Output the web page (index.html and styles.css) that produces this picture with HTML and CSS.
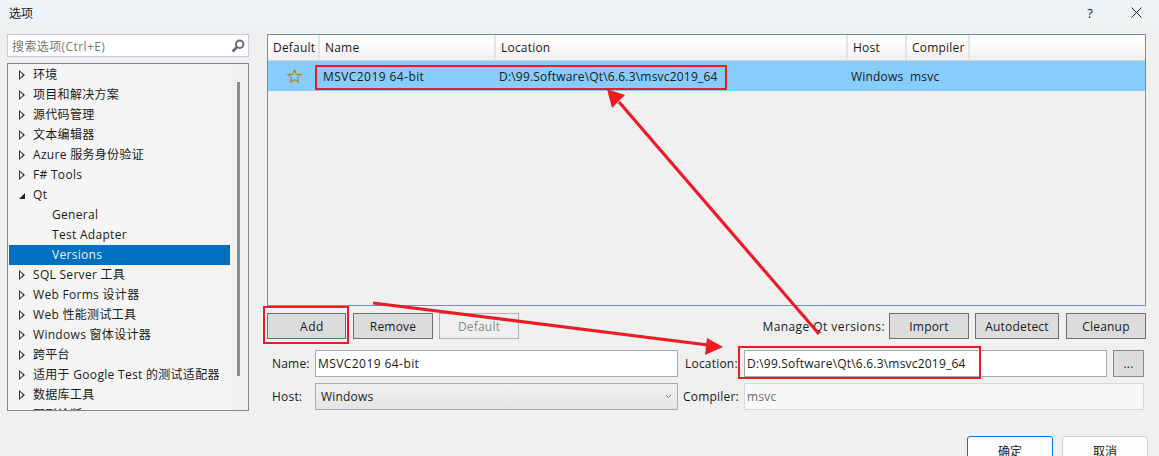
FILE: index.html
```html
<!DOCTYPE html>
<html lang="zh">
<head>
<meta charset="utf-8">
<title>选项</title>
<link rel="stylesheet" href="styles.css">
</head>
<body>
<div class="window">
  <header class="titlebar">
    <span class="title">选项</span>
    <span class="help">?</span>
    <svg class="close" width="11" height="11" viewBox="0 0 11 11"><path d="M0.5 0.5L10.5 10.5M10.5 0.5L0.5 10.5" stroke="#222" stroke-width="1" fill="none"/></svg>
  </header>
  <main class="main">
    <aside class="left">
      <div class="search">
        <span class="search-text">搜索选项(Ctrl+E)</span>
        <svg class="search-icon" width="14" height="14" viewBox="0 0 14 14"><circle cx="8.7" cy="5.3" r="3.7" fill="none" stroke="#6a6a6a" stroke-width="2"/><path d="M6 8L1.5 12.5" stroke="#6a6a6a" stroke-width="2.6" fill="none"/></svg>
      </div>
      <div class="tree">
        <div class="tree-list">
          <div class="node closed">环境</div>
          <div class="node closed">项目和解决方案</div>
          <div class="node closed">源代码管理</div>
          <div class="node closed">文本编辑器</div>
          <div class="node closed">Azure 服务身份验证</div>
          <div class="node closed">F# Tools</div>
          <div class="node open">Qt</div>
          <div class="node child">General</div>
          <div class="node child">Test Adapter</div>
          <div class="node child selected">Versions</div>
          <div class="node closed">SQL Server 工具</div>
          <div class="node closed">Web Forms 设计器</div>
          <div class="node closed">Web 性能测试工具</div>
          <div class="node closed">Windows 窗体设计器</div>
          <div class="node closed">跨平台</div>
          <div class="node closed">适用于 Google Test 的测试适配器</div>
          <div class="node closed">数据库工具</div>
          <div class="node closed">图形诊断</div>
        </div>
        <div class="scrollbar"><div class="thumb"></div></div>
      </div>
    </aside>
    <section class="right">
      <div class="table">
        <div class="thead">
          <div class="th c-default">Default</div>
          <div class="th c-name">Name</div>
          <div class="th c-location">Location</div>
          <div class="th c-host">Host</div>
          <div class="th c-compiler">Compiler</div>
        </div>
        <div class="tr">
          <div class="td c-default star-cell">
            <svg width="15" height="14" viewBox="0 0 15 14"><path d="M7.5 1L9.3 5.2L14 5.6L10.4 8.6L11.5 13L7.5 10.7L3.5 13L4.6 8.6L1 5.6L5.7 5.2Z" fill="none" stroke="#b0851f" stroke-width="1.2"/></svg>
          </div>
          <div class="td c-name wide">MSVC2019 64-bit</div>
          <div class="td c-location">D:\99.Software\Qt\6.6.3\msvc2019_64</div>
          <div class="td c-host">Windows</div>
          <div class="td c-compiler">msvc</div>
        </div>
      </div>
      <div class="actions">
        <button class="btn btn-add">Add</button>
        <button class="btn btn-remove">Remove</button>
        <button class="btn btn-off">Default</button>
        <span class="manage wide">Manage Qt versions:</span>
        <button class="btn btn-import">Import</button>
        <button class="btn btn-auto">Autodetect</button>
        <button class="btn btn-clean">Cleanup</button>
      </div>
      <div class="form">
        <label class="lbl">Name:</label>
        <div class="field wide">MSVC2019 64-bit</div>
        <label class="lbl lbl-loc">Location:</label>
        <div class="loc-wrap">
          <div class="field field-pad">D:\99.Software\Qt\6.6.3\msvc2019_64</div>
          <button class="btn browse">...</button>
        </div>
        <label class="lbl">Host:</label>
        <div class="select">Windows
          <svg class="chev" width="7" height="5" viewBox="0 0 7 5"><path d="M1 1L3.5 3.5L6 1" fill="none" stroke="#777" stroke-width="1"/></svg>
        </div>
        <label class="lbl lbl-comp">Compiler:</label>
        <div class="field field-off">msvc</div>
      </div>
    </section>
  </main>
  <footer class="footer">
    <button class="dlg dlg-ok">确定</button>
    <button class="dlg">取消</button>
  </footer>
  <svg class="marks" width="1159" height="456" viewBox="0 0 1159 456">
    <g fill="none" stroke="#ed1c24" stroke-width="2">
      <rect x="316" y="66" width="410" height="23"/>
      <rect x="264" y="307" width="84" height="36"/>
      <rect x="739" y="347" width="241" height="31"/>
    </g>
    <g stroke="#ed1c24" stroke-width="3.2" fill="none">
      <path d="M373 303L708 345"/>
      <path d="M819 334L619 102"/>
    </g>
    <g fill="#ed1c24">
      <polygon points="723,347 705,355 707,338"/>
      <polygon points="607,89 625,95 612,108"/>
    </g>
  </svg>
</div>
</body>
</html>
```

FILE: styles.css
```css
* { box-sizing: border-box; }
html, body { margin: 0; padding: 0; }
body {
  width: 1159px;
  height: 456px;
  overflow: hidden;
  background: #f0f0f0;
  color: #1a1a1a;
  font-family: "Open Sans", "Noto Sans CJK SC", sans-serif;
  font-size: 12px;
  letter-spacing: .2px;
}
.window { position: relative; width: 1159px; height: 456px; overflow: hidden; }
.wide { letter-spacing: .43px; }

.titlebar {
  height: 25px;
  background: #eff3f7;
  display: flex;
  align-items: center;
  padding: 0 17px 0 9px;
  font-size: 12px;
}
.title { flex: 1; letter-spacing: 0; }
.help { margin-right: 38px; font-size: 13px; }

.main { display: flex; padding: 9px 13px 0 7px; gap: 18px; }
.left { width: 242px; flex: none; }
.search {
  height: 23px;
  background: #fff;
  border: 1px solid #c5cbe0;
  display: flex;
  align-items: center;
  justify-content: space-between;
  padding: 0 3px 0 4px;
  color: #777;
  letter-spacing: .4px;
}
.tree {
  margin-top: 6px;
  height: 348px;
  border: 1px solid #828790;
  background: #f5f5f5;
  display: flex;
  overflow: hidden;
}
.tree-list { width: 222px; flex: none; padding: 1px 0 0 1px; overflow: hidden; }
.node {
  height: 20px;
  line-height: 20px;
  padding-left: 24px;
  position: relative;
  white-space: nowrap;
  letter-spacing: .3px;
}
.node.child { padding-left: 43px; }
.node.selected { background: #006fc0; color: #e8f3fb; }
.closed::before {
  content: "";
  position: absolute;
  left: 10px;
  top: 5px;
  width: 0;
  height: 0;
  border-left: 6px solid #333;
  border-top: 5px solid transparent;
  border-bottom: 5px solid transparent;
}
.closed::after {
  content: "";
  position: absolute;
  left: 11px;
  top: 7px;
  width: 0;
  height: 0;
  border-left: 3px solid #f5f5f5;
  border-top: 3px solid transparent;
  border-bottom: 3px solid transparent;
}
.open::before {
  content: "";
  position: absolute;
  left: 10px;
  top: 8px;
  width: 0;
  height: 0;
  border-right: 6px solid #222;
  border-top: 6px solid transparent;
}
.scrollbar { flex: 1; background: #f0f0f0; border-left: 1px solid #fafafa; padding: 18px 0 0 6px; }
.thumb { width: 3px; height: 294px; background: #8a8a8a; }

.right { width: 879px; flex: none; }
.table {
  height: 272px;
  border: 1px solid #6d8fb8;
  background: #f0f0f0;
}
.thead {
  display: flex;
  height: 26px;
  background: linear-gradient(#fff 20%, #f0f0f0);
  border-bottom: 1px solid #d5d5d5;
}
.th {
  line-height: 26px;
  padding-left: 5px;
  border-right: 2px solid #e4e4e4;
  height: 25px;
}
.tr { display: flex; height: 30px; line-height: 31px; background: #87cdfb; }
.td { padding-left: 3px; white-space: nowrap; }
.c-default { width: 52px; }
.c-name { width: 176px; }
.c-location { width: 352px; }
.c-host { width: 59px; }
.c-compiler { width: 63px; }
.star-cell { display: flex; align-items: center; justify-content: center; padding: 0 0 0 0; }

.actions { display: flex; align-items: center; margin-top: 7px; height: 26px; }
.btn {
  font: inherit;
  letter-spacing: inherit;
  color: inherit;
  height: 26px;
  padding: 0;
  background: #dcdcdc;
  border: 1px solid #707070;
}
.btn-add { width: 79px; margin-right: 7px; padding-left: 11px; letter-spacing: .5px; }
.btn-remove { width: 80px; margin-right: 6px; }
.btn-off { width: 80px; background: #f0f0f0; border-color: #adb2b5; color: #8a8a8a; }
.manage { margin-left: auto; margin-right: 4px; }
.btn-import { width: 80px; margin-right: 6px; }
.btn-auto { width: 84px; margin-right: 7px; }
.btn-clean { width: 80px; }

.form {
  display: grid;
  grid-template-columns: 48px 363px 66px 1fr;
  grid-template-rows: 27px 27px;
  row-gap: 6px;
  margin-top: 11px;
  align-items: center;
}
.lbl { padding-left: 5px; white-space: nowrap; }
.lbl-loc { padding-left: 7px; }
.lbl-comp { padding-left: 5px; }
.field {
  height: 27px;
  line-height: 26px;
  background: #fff;
  border: 1px solid #a9a9a9;
  padding-left: 2px;
  white-space: nowrap;
}
.field-pad { width: 363px; padding-left: 2px; flex: none; }
.loc-wrap { display: flex; gap: 6px; }
.browse { width: 31px; height: 27px; border-color: #8a8a8a; }
.select {
  position: relative;
  height: 27px;
  line-height: 25px;
  padding-left: 5px;
  border: 1px solid #acacac;
  background: linear-gradient(#f0f0f0, #e5e5e5);
}
.chev { position: absolute; right: 5px; top: 10px; }
.field-off { width: 400px; background: #f8f8f8; border-color: #d8d8d8; color: #6d6d6d; }

.footer {
  display: flex;
  justify-content: flex-end;
  gap: 9px;
  padding-right: 11px;
  margin-top: 25px;
}
.dlg {
  font: inherit;
  color: inherit;
  width: 86px;
  height: 30px;
  background: #fdfdfd;
  border: 1px solid #d0d0d0;
  border-radius: 3px;
  padding: 0;
  flex: none;
}
.dlg-ok { border: 1px solid #0078d7; }

.marks { position: absolute; left: 0; top: 0; pointer-events: none; }
```
